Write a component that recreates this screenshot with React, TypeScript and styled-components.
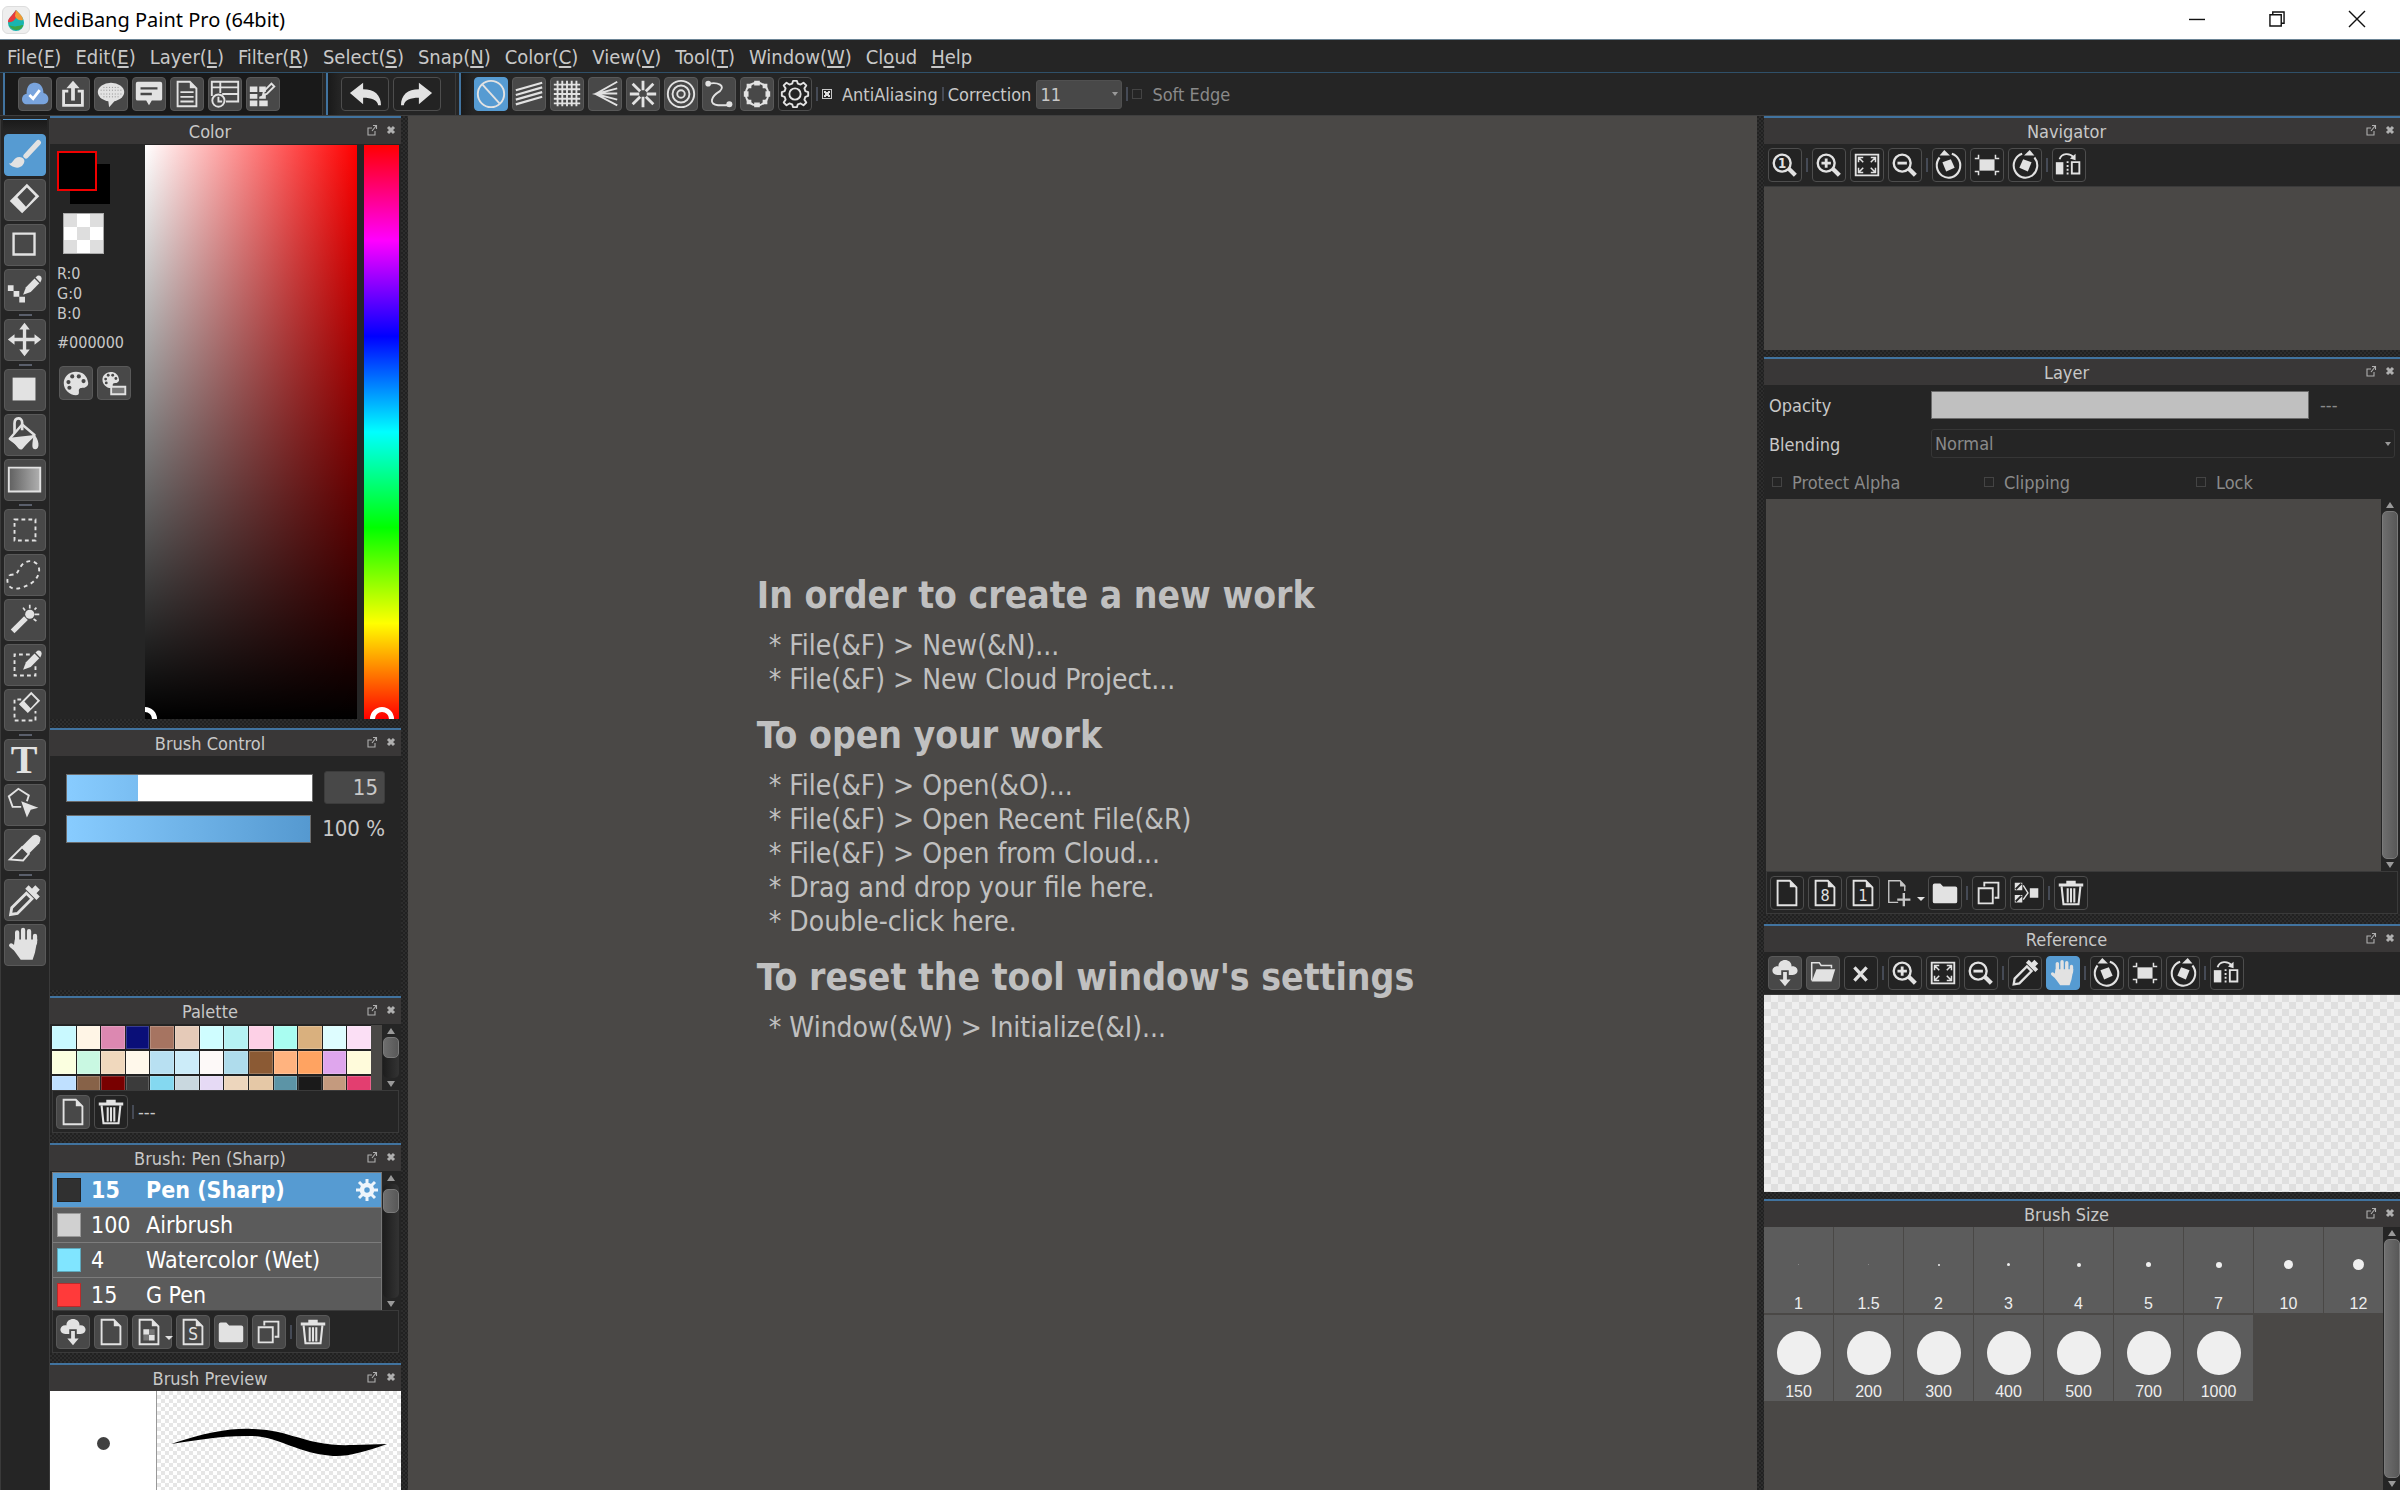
import React, { useState } from "react";
import styled, { createGlobalStyle, css } from "styled-components";

const c = {
  base: "#252525",
  canvas: "#4a4846",
  title: "#393737",
  line: "#3a3a3a",
  accent: "#569bd2",
  dock: "#41739f",
  icon: "#e2e2e2",
  text: "#c8c8c8",
  dim: "#8a8a8a",
};

const GlobalStyle = createGlobalStyle`
  *, *::before, *::after { box-sizing: border-box; }
  body {
    margin: 0;
    background: ${c.base};
    color: ${c.text};
    font-family: "DejaVu Sans Condensed", "Noto Sans", sans-serif;
    font-size: 18px;
  }
  button, input, select { font: inherit; color: inherit; margin: 0; }
  button { cursor: pointer; }
  h1, h2, p, ul { margin: 0; padding: 0; }
  ul { list-style: none; }
`;

/* ---------- icons ---------- */

const Svg = styled.svg`
  display: block;
  width: 100%;
  height: 100%;
  overflow: visible;
  fill: none;
  stroke: ${c.icon};
  stroke-width: 2;
  .f { fill: ${c.icon}; stroke: none; }
  .d { fill: #484848; stroke: none; }
  text { fill: ${c.icon}; stroke: none; text-anchor: middle; }
`;

const docPath = "M7 4H20L27 11V30H7Z";
const docFold = "M20 4V11H27Z";

const Magnifier = () => (
  <>
    <circle cx="14" cy="15" r="9" strokeWidth="2.5" />
    <path d="M21 21L28 28" strokeWidth="4.5" />
  </>
);
const Cloud = () => (
  <path
    className="f"
    d="M10 19C1 20 2 9 10 10C10 1 24 1 24 10C32 9 33 20 24 19H21V14H13V19Z"
  />
);
const Fingers = () => (
  <>
    <path d="M11 14V7M16 14V5M21 14V6M26 16V10" strokeWidth="3.6" strokeLinecap="round" />
    <path d="M12 23L6 18" strokeWidth="3.6" strokeLinecap="round" />
    <path className="f" d="M9 13H28L26 24L24 30H14L9 23L8 20Z" />
  </>
);
const Dropper = () => (
  <>
    <path d="M19 10L24 15L11 28L5 29L6 23Z" strokeWidth="2.5" />
    <path className="f" d="M18 6L21 3L31 13L28 16ZM22 8L27 3L31 7L26 12Z" />
  </>
);
const Trash = () => (
  <>
    <path className="f" d="M12 4H22V7H30V10H4V7H12Z" />
    <path d="M7 10L9 29H25L27 10M13.500 12V27M20.500 12V27M17 12V27" strokeWidth="2.2" />
  </>
);
const PaletteShape = () => (
  <>
    <path
      className="f"
      d="M17 5C9 5 4 11 4 17C4 24 10 30 17 30C21 30 20 27 20 25C20 22 23 22 26 22C29 21 30 19 30 17C29 9 24 5 17 5Z"
    />
    <g className="d">
      <circle cx="9" cy="16" r="2.200" />
      <circle cx="13" cy="10" r="2.200" />
      <circle cx="20" cy="10" r="2.200" />
      <circle cx="25" cy="15" r="2.200" />
      <circle cx="10" cy="22" r="2.200" />
    </g>
  </>
);

const small: Record<string, React.ReactNode> = {
  cloudCheck: (
    <>
      <path
        d="M9 28C1 28 2 17 8 17C8 7 13 5 17 5C22 5 26 9 26 16C33 17 33 28 26 28Z"
        style={{ fill: "#79a4dd", stroke: "none" }}
      />
      <path d="M11 18L15 22L22 13" style={{ stroke: "#fff" }} strokeWidth="3" />
    </>
  ),
  share: (
    <>
      <path d="M12 14H7V29H27V14H22" strokeWidth="3" />
      <path d="M17 24V9" strokeWidth="4" />
      <path className="f" d="M17 3L24 11H10Z" />
    </>
  ),
  bubble: (
    <>
      <ellipse className="f" cx="17" cy="15" rx="14" ry="10" />
      <path className="f" d="M14 23L15 31L23 22Z" />
      <path
        d="M9 10H26M6 13H29M6 17H29M9 20H26"
        style={{ stroke: "#8a8a8a" }}
        strokeWidth="1"
        strokeDasharray="1 2"
      />
    </>
  ),
  comment: (
    <>
      <path className="f" d="M5 4H29Q31 4 31 6V22Q31 24 29 24H20L17 29L14 24H5Q3 24 3 22V6Q3 4 5 4Z" />
      <path d="M8 11H26M8 17H20" style={{ stroke: "#484848" }} strokeWidth="2.500" />
    </>
  ),
  docText: (
    <>
      <path d={docPath} />
      <path className="f" d={docFold} />
      <path d="M10 15H24M10 20H24M10 25H24" />
    </>
  ),
  tableClock: (
    <>
      <path d="M3 19V4H31V25H18M3 10H31M12 4V16M14 17H31" />
      <circle cx="10" cy="24" r="6.500" />
      <path d="M10 20V25H14" />
    </>
  ),
  gridPen: (
    <>
      <path className="f" d="M3 9H11V15H3ZM13 9H20V15H13ZM3 17H11V22H3ZM13 20L20 17V22H13ZM3 24H11V30H3ZM13 24H22V30H13Z" />
      <path d="M17 18L18 14L26 6L29 9L21 17Z" />
    </>
  ),
  ban: (
    <>
      <circle cx="17" cy="17" r="14" />
      <path d="M8 7L26 27" />
    </>
  ),
  parallel: <path d="M3 13L31 5M3 18L31 10M3 23L31 15M3 28L31 20" strokeWidth="2.300" />,
  grid: <path d="M7 3V30M12 3V30M17 3V30M22 3V30M27 3V30M3 7H31M3 12H31M3 17H31M3 22H31M3 27H31" />,
  persp: <path d="M30 4L7 17L30 29M30 11L7 17L30 23M30 16.500H7" />,
  radial: (
    <path d="M17 3V13M17 20V31M3 17H13M21 17H31M6 6L14 14M28 6L20 14M6 28L14 20M28 28L20 20" strokeWidth="3" />
  ),
  rings: (
    <>
      <circle cx="17" cy="17" r="14" />
      <circle cx="17" cy="17" r="9" />
      <circle cx="17" cy="17" r="4" />
    </>
  ),
  curve: (
    <>
      <path d="M6 6C16 4 24 8 18 14C8 20 6 28 16 29H27" />
      <circle className="f" cx="5.500" cy="6" r="3" />
      <circle className="f" cx="28" cy="28" r="3.200" />
    </>
  ),
  ellipse: (
    <>
      <circle cx="17" cy="17" r="12" />
      <path className="f" d="M14 3H20V8H14ZM14 26H20V31H14ZM3 14H8V20H3ZM26 14H31V20H26ZM6 6H11V11H6ZM23 6H28V11H23ZM6 23H11V28H6ZM23 23H28V28H23Z" />
    </>
  ),
  gear: (
    <>
      <path
        strokeLinejoin="round"
        d="M15 3H19L20 6L23 7L26 5L29 8L27 11L28 14L31 15V19L28 20L27 23L29 26L26 29L23 27L20 28L19 31H15L14 28L11 27L8 29L5 26L7 23L6 20L3 19V15L6 14L7 11L5 8L8 5L11 7L14 6Z"
      />
      <circle cx="17" cy="17" r="6" />
    </>
  ),
  palette: <PaletteShape />,
  paletteBar: (
    <>
      <g transform="translate(2 2) scale(.68)">
        <PaletteShape />
      </g>
      <path d="M14 21H29V29H14Z" style={{ fill: "#777" }} />
    </>
  ),
  zoom1: (
    <>
      <Magnifier />
      <text x="14" y="20" fontSize="14" fontWeight="700">1</text>
    </>
  ),
  zoomIn: (
    <>
      <Magnifier />
      <path d="M9 15H19M14 10V20" strokeWidth="3" />
    </>
  ),
  zoomOut: (
    <>
      <Magnifier />
      <path d="M9 15H19" strokeWidth="3" />
    </>
  ),
  fit: (
    <>
      <path d="M5 6H29V28H5Z" />
      <path d="M8 14V9H13M8 9L13 14M21 9H26V14M26 9L21 14M8 20V25H13M8 25L13 20M26 20V25H21M26 25L21 20" strokeWidth="1.600" />
    </>
  ),
  rotL: (
    <>
      <path d="M7 9A12.500 13 0 1 0 20 5" strokeWidth="2.200" />
      <path className="f" d="M7 7L12 1L18 7Z" />
      <path className="f" d="M10 14L19 11L23 20L14 24Z" />
    </>
  ),
  rotR: (
    <>
      <path d="M27 9A12.500 13 0 1 1 14 5" strokeWidth="2.200" />
      <path className="f" d="M27 7L22 1L16 7Z" />
      <path className="f" d="M24 14L15 11L11 20L20 24Z" />
    </>
  ),
  reset: (
    <>
      <path className="f" d="M9 11H25V23H9Z" />
      <path d="M4 10H8V6M26 6V10H30M4 24H8V28M26 28V24H30" strokeWidth="1.600" />
    </>
  ),
  flip: (
    <>
      <path className="f" d="M3 14H11V27H3Z" />
      <path d="M20 14H28V26H20Z" />
      <path d="M15.500 13V28" strokeDasharray="2 2" />
      <path d="M7 11C9 4 18 4 22 9" />
      <path className="f" d="M18 10L24 5L24 12Z" />
    </>
  ),
  doc: (
    <>
      <path d={docPath} />
      <path className="f" d={docFold} />
    </>
  ),
  doc8: (
    <>
      <path d={docPath} />
      <path className="f" d={docFold} />
      <text x="17" y="25" fontSize="17">8</text>
    </>
  ),
  doc1: (
    <>
      <path d={docPath} />
      <path className="f" d={docFold} />
      <text x="17" y="25" fontSize="17">1</text>
    </>
  ),
  docS: (
    <>
      <path d={docPath} />
      <path className="f" d={docFold} />
      <text x="17" y="26" fontSize="18">S</text>
    </>
  ),
  docChecker: (
    <>
      <path d={docPath} />
      <path className="f" d={docFold} />
      <path className="f" d="M11 14H17V20H11ZM17 20H23V26H17Z" />
      <path d="M17 14H23V20H17ZM11 20H17V26H11Z" style={{ fill: "#777", stroke: "none" }} />
    </>
  ),
  docPlus: (
    <g style={{ opacity: 0.85 }}>
      <path d="M14 27H4V4H16L21 9V15" strokeWidth="1.500" />
      <path className="f" d="M16 4V10H22Z" />
      <path d="M13 24H27M20 17V31" strokeWidth="2.500" />
    </g>
  ),
  folder: <path className="f" d="M4 9Q4 7 6 7H12L15 10H28Q30 10 30 12V26Q30 28 28 28H6Q4 28 4 26Z" />,
  folderOpen: (
    <>
      <path d="M5 25V6H13L15 9H26V12" strokeWidth="1.600" />
      <path className="f" d="M10 13H30L26 26H5Z" />
    </>
  ),
  copy: (
    <>
      <path d="M6 12H21V28H6Z" />
      <path d="M12 10V6H27V22H23" />
    </>
  ),
  merge: (
    <>
      <path className="f" d="M4 6H12V14H4ZM4 19H12V27H4ZM20 12H29V22H20Z" />
      <path d="M5 13L11 7M5 26L11 20" style={{ stroke: "#252525" }} />
      <path d="M13 9L18 17L13 24" strokeWidth="1.500" />
    </>
  ),
  trash: <Trash />,
  cloudDown: (
    <>
      <Cloud />
      <path className="f" d="M15 16H19V24H23L17 31L11 24H15Z" />
    </>
  ),
  cross: <path d="M10 11L23 25M23 11L10 25" strokeWidth="3.500" />,
  dropper: <Dropper />,
  hand: <Fingers />,
};

const wide: Record<string, React.ReactNode> = {
  undo: <path className="f" d="M8 16L22 5V12C34 12 41 18 41 29H38C37 23 31 21 22 21V28Z" />,
  redo: <path className="f" d="M40 16L26 5V12C14 12 7 18 7 29H10C11 23 17 21 26 21V28Z" />,
};

const eraserPath = "M23 4L36 17L18 35L5 22ZM23 8L13 18L22 28L32 17Z";
const dashBox = "M10 10H32V32H10Z";
const Pencil = () => (
  <>
    <path className="f" d="M19 26L22 18L31 9L36 14L27 23Z" />
    <path className="f" d="M32 8L34 6Q36 5 38 7Q39 9 38 11L37 13Z" />
  </>
);

const tools: Record<string, React.ReactNode> = {
  brush: (
    <>
      <path d="M22 22L35 8" strokeWidth="5.500" strokeLinecap="round" />
      <path className="f" d="M4 30C9 30 9 23 15 23C20 23 22 27 19 31C16 36 8 35 4 30Z" />
    </>
  ),
  eraser: <path className="f" fillRule="evenodd" d={eraserPath} />,
  rect: <path d="M9 9H31V31H9Z" strokeWidth="2.500" />,
  dotPen: (
    <>
      <path className="f" d="M3 16H9V22H3ZM9 22H15V28H9ZM15 28H21V34H15Z" />
      <Pencil />
    </>
  ),
  move: (
    <>
      <path d="M20.500 8V33M8 20.500H33" strokeWidth="3.500" />
      <path className="f" d="M20.500 3L26 10H15ZM20.500 38L26 31H15ZM3 20.500L10 15V26ZM38 20.500L31 15V26Z" />
    </>
  ),
  fillRect: <path className="f" d="M8 8H32V32H8Z" />,
  bucket: (
    <>
      <path d="M10 19V9C10 2 18 2 18 8V16" strokeWidth="2.800" />
      <path d="M18 10L31 21L17 34L5 25Z" strokeWidth="2.500" strokeLinejoin="round" />
      <path className="f" d="M5 24L31 21L18 36Q16 37 14 35Z" />
      <path className="f" d="M30 20C36 25 37 36 32 36C27 36 29 30 30 20Z" />
    </>
  ),
  gradient: (
    <>
      <defs>
        <linearGradient id="toolGradient">
          <stop offset="0" stopColor="#606060" />
          <stop offset="1" stopColor="#b0b0b0" />
        </linearGradient>
      </defs>
      <path d="M4 8H37V33H4Z" style={{ fill: "url(#toolGradient)" }} />
    </>
  ),
  selRect: <path d={dashBox} strokeDasharray="4 3.300" />,
  lasso: (
    <path
      d="M5 21L12 20L16 13C19 7 27 4 33 9C39 15 35 25 27 30C19 35 8 38 4 32C1 26 3 24 5 21"
      strokeDasharray="4 4"
    />
  ),
  wand: (
    <>
      <path d="M8 33L22 19" strokeWidth="5.500" />
      <circle className="f" cx="26" cy="15" r="4.800" />
      <path d="M26 5V9M19 8L21 11M33 8L31 10M31 15H36M30 20L33 22" strokeWidth="1.800" />
    </>
  ),
  selPen: (
    <>
      <path d="M26 10H10V32H32V20" strokeDasharray="4 3.300" />
      <Pencil />
    </>
  ),
  selEraser: (
    <>
      <path d="M17 10H10V32H32V22" strokeDasharray="4 3.300" />
      <g transform="translate(11 -1) scale(.72)">
        <path className="f" fillRule="evenodd" d={eraserPath} />
      </g>
    </>
  ),
  text: (
    <text x="20" y="35" fontSize="42" fontWeight="700" fontFamily="Liberation Serif, serif">T</text>
  ),
  polyCursor: (
    <>
      <path d="M17 23H8L4 12L14 4L25 11L23 17" />
      <path className="f" d="M17 17L35 24L27 26L23 34Z" />
    </>
  ),
  knife: (
    <>
      <path d="M5 31L18 18L25 25L19 32Z" />
      <path className="f" d="M17 18L29 6Q34 3 37 8Q38 11 36 14L25 25Z" />
    </>
  ),
  dropper: (
    <g transform="translate(0 2) scale(1.180)">
      <Dropper />
    </g>
  ),
  hand: (
    <g transform="translate(-1 -1) scale(1.250)">
      <Fingers />
    </g>
  ),
};

/* ---------- shared parts ---------- */

type Look = "raised" | "flat" | "active" | "bare";

const looks = {
  raised: css`background: #484848; border-color: #595959;`,
  flat: css`background: #232323; border-color: #4d4d4d;`,
  active: css`background: ${c.accent}; border-color: ${c.accent};`,
  bare: css`background: transparent; border-color: transparent;`,
};

const IconButton = styled.button<{ $look: Look; $w?: number; $h?: number }>`
  display: flex;
  align-items: center;
  flex: none;
  width: ${(p) => p.$w ?? 34}px;
  height: ${(p) => p.$h ?? 34}px;
  padding: 0;
  border: 1px solid;
  border-radius: 4px;
  ${(p) => looks[p.$look]}
`;

const Tick = styled.span`
  flex: none;
  align-self: flex-end;
  margin-bottom: 8px;
  border: 4px solid transparent;
  border-top-color: ${c.icon};
  border-bottom: 0;
`;

const Divider = styled.span`
  flex: none;
  width: 2px;
  height: 14px;
  background: #454a55;
`;

const Bar = styled.div`
  display: flex;
  align-items: center;
  gap: 4px;
  height: 43px;
  padding: 0 4px;
  border: solid ${c.line};
  border-width: 0 0 1px;
  flex: none;
`;

type Item = "|" | [name: string, label: string, look?: Look, menu?: boolean];

const Icons = ({ items, look = "flat" }: { items: Item[]; look?: Look }) => (
  <>
    {items.map((it, i) =>
      it === "|" ? (
        <Divider key={i} />
      ) : (
        <IconButton key={i} $look={it[2] ?? look} $w={it[3] ? 40 : 34} aria-label={it[1]}>
          <Svg viewBox="0 0 34 34">{small[it[0]]}</Svg>
          {it[3] && <Tick />}
        </IconButton>
      )
    )}
  </>
);

const PanelBox = styled.section<{ $grow?: boolean }>`
  display: flex;
  flex-direction: column;
  flex: ${(p) => (p.$grow ? "1 1 0" : "none")};
  min-height: 0;
  border-top: 2px solid ${c.dock};
`;

const PanelTitle = styled.header`
  display: flex;
  align-items: center;
  flex: none;
  height: 26px;
  background: ${c.title};
  h2 {
    flex: 1;
    padding-left: 6px;
    text-align: center;
    font-size: 18px;
    line-height: 26px;
    padding-top: 1px;
    font-weight: 400;
  }
`;

const TitleButton = styled.button`
  width: 16px;
  height: 24px;
  padding: 0 2px 2px;
  border: 0;
  background: none;
  margin-right: 3px;
  & + & { margin-right: 2px; }
  svg { stroke: #b0b0b0; }
`;

const Splitter = styled.div<{ $vertical?: boolean; $size: number }>`
  flex: none;
  ${(p) => (p.$vertical ? `width: ${p.$size}px;` : `height: ${p.$size}px;`)}
  background: repeating-conic-gradient(#2d2d2d 0 25%, #212121 0 50%) 0 0 / 4px 4px;
`;

const Panel = ({ title, grow, children }: { title: string; grow?: boolean; children: React.ReactNode }) => (
  <PanelBox $grow={grow}>
    <PanelTitle>
      <h2>{title}</h2>
      <TitleButton aria-label={`Float ${title}`}>
        <Svg viewBox="0 0 12 12">
          <path d="M6 4H2V11H9V7M6 7L10 2M7 1.500H10.500V5" strokeWidth="1.100" />
        </Svg>
      </TitleButton>
      <TitleButton aria-label={`Close ${title}`}>
        <Svg viewBox="0 0 12 12">
          <path d="M3 3L9 9M9 3L3 9" strokeWidth="3" />
        </Svg>
      </TitleButton>
    </PanelTitle>
    {children}
  </PanelBox>
);

const ScrollTrack = styled.div`
  display: flex;
  flex-direction: column;
  align-items: center;
  flex: none;
  width: 17px;
  background: ${c.base};
`;
const Arrow = styled.span<{ $down?: boolean }>`
  margin: 3px 0;
  border: solid transparent;
  border-width: 0 4px;
  ${(p) => (p.$down ? "border-top: 6px solid #9a9a9a;" : "border-bottom: 6px solid #9a9a9a;")}
`;
const Groove = styled.div<{ $top: number }>`
  flex: 1;
  min-height: 0;
  width: 16px;
  padding-top: ${(p) => p.$top}px;
  border-radius: 5px;
  background: linear-gradient(90deg, #1d1d1d, #333);
`;
const Thumb = styled.div<{ $h: string }>`
  height: ${(p) => p.$h};
  border-radius: 5px;
  border: 1px solid #7a7a7a;
  background: linear-gradient(90deg, #6e6e6e, #585858);
`;
const Scrollbar = ({ thumb, top = 0 }: { thumb: string; top?: number }) => (
  <ScrollTrack>
    <Arrow />
    <Groove $top={top}>
      <Thumb $h={thumb} />
    </Groove>
    <Arrow $down />
  </ScrollTrack>
);

const Check = styled.label<{ $dim?: boolean }>`
  display: flex;
  align-items: center;
  gap: 10px;
  color: ${(p) => (p.$dim ? c.dim : c.text)};
  white-space: nowrap;
  input {
    appearance: none;
    width: 10px;
    height: 10px;
    border: 1px solid ${(p) => (p.$dim ? "#444" : "#c8c8c8")};
  }
  input:checked {
    background:
      linear-gradient(45deg, transparent 40%, #ddd 40% 60%, transparent 60%) center / 6px 6px no-repeat,
      linear-gradient(-45deg, transparent 40%, #ddd 40% 60%, transparent 60%) center / 6px 6px no-repeat;
  }
`;

const Range = styled.input.attrs({ type: "range" })<{ $fill: number; $solid?: string }>`
  appearance: none;
  flex: 1;
  min-width: 0;
  height: 28px;
  border: 1px solid #6b6b6b;
  background: ${(p) =>
    p.$solid ??
    `linear-gradient(90deg, transparent ${p.$fill}%, #fff ${p.$fill}%),
     linear-gradient(90deg, #88ccff, #5599d0)`};
  &::-webkit-slider-thumb { appearance: none; width: 1px; height: 26px; }
`;

/* ---------- window chrome ---------- */

const Window = styled.div`
  display: flex;
  flex-direction: column;
  height: 100vh;
  overflow: hidden;
`;

const TitleBar = styled.header`
  display: flex;
  align-items: center;
  flex: none;
  height: 40px;
  padding: 0 3px 0 2px;
  background: #fff;
  border-bottom: 1px solid #6d8596;
  color: #000;
  h1 {
    flex: 1;
    padding-left: 4px;
    font: 400 20px/38px "Noto Sans", "Open Sans", sans-serif;
  }
`;
const Logo = styled.span`
  display: block;
  width: 28px;
  height: 28px;
  border: 1px solid #ddd;
  border-radius: 6px;
  background: #eee;
`;
const WindowButton = styled.button`
  width: 80px;
  height: 36px;
  padding: 0 32px 2px;
  border: 0;
  background: none;
  svg { stroke: #111; }
`;

const MenuBar = styled.nav`
  display: flex;
  flex: none;
  height: 33px;
  border-bottom: 1px solid #2f5069;
`;
const MenuButton = styled.button`
  padding: 2px 7px 0;
  border: 0;
  background: none;
  font-size: 20px;
  line-height: 30px;
  white-space: nowrap;
  u { text-underline-offset: 2px; }
`;

const ToolBars = styled.div`
  display: flex;
  flex: none;
  height: 43px;
  border-bottom: 1px solid #3f3f3f;
`;
const ToolGroup = styled.div<{ $w?: number; $dark?: boolean }>`
  display: flex;
  align-items: center;
  gap: 4px;
  padding-left: 13px;
  border-left: 2px solid ${c.dock};
  margin-left: 3px;
  ${(p) => (p.$w ? `width: ${p.$w}px; border-right: 1px solid ${c.line};` : "flex: 1;")}
  background: ${(p) => (p.$dark ? "#191919" : `linear-gradient(90deg, #1a1a1a, ${c.base} 12px)`)};
`;
const Correction = styled.label`
  display: flex;
  align-items: center;
  gap: 5px;
`;
const SelectWrap = styled.span<{ $disabled?: boolean; $w?: number }>`
  display: flex;
  align-items: center;
  ${(p) => (p.$w ? `width: ${p.$w}px;` : "flex: 1;")}
  height: 29px;
  padding-right: 3px;
  border: 1px solid ${(p) => (p.$disabled ? "#363636" : "#505050")};
  border-radius: 3px;
  background: ${(p) => (p.$disabled ? "transparent" : "#484848")};
  select {
    appearance: none;
    flex: 1;
    min-width: 0;
    border: 0;
    padding: 0 3px;
    background: none;
    opacity: 1;
    color: ${(p) => (p.$disabled ? c.dim : c.text)};
  }
`;
const Caret = styled.span`
  border: 3px solid transparent;
  border-top: 4px solid #9a9a9a;
  border-bottom: 0;
`;

const Workspace = styled.main`
  display: flex;
  flex: 1;
  min-height: 0;
`;

const ToolColumn = styled.div`
  display: flex;
  flex-direction: column;
  align-items: center;
  gap: 3px;
  flex: none;
  width: 50px;
  margin-top: 3px;
  padding: 0 1px;
  border: solid ${c.line};
  border-width: 0 1px;
  &::before {
    content: "";
    width: 44px;
    height: 12px;
    border-top: 1px solid ${c.accent};
    background: linear-gradient(#1a1a1a, ${c.base});
  }
`;
const ToolDivider = styled.span`
  width: 13px;
  height: 2px;
  background: #5a5f6b;
`;

const Dock = styled.aside<{ $w: number }>`
  display: flex;
  flex-direction: column;
  flex: none;
  width: ${(p) => p.$w}px;
`;

/* ---------- color panel ---------- */

const ColorBody = styled.div`
  display: flex;
  height: 575px;
  padding: 1px 2px 0 7px;
`;
const ColorSide = styled.div`
  display: flex;
  flex-direction: column;
  width: 88px;
  padding-top: 6px;
  font-size: 16px;
  line-height: 20px;
`;
const Swatches = styled.div`
  position: relative;
  height: 53px;
  &::before, &::after {
    content: "";
    position: absolute;
    width: 40px;
    height: 40px;
    background: #000;
  }
  &::before { left: 13px; top: 13px; }
  &::after { left: 0; top: 0; border: 2px solid #f00000; }
`;
const Transparent = styled.button`
  width: 41px;
  height: 41px;
  margin: 9px 0 10px 6px;
  border: 1px solid #aaa;
  background: repeating-conic-gradient(#dedede 0 25%, #fff 0 50%) 13px 0 / 26px 26px;
`;
const Hex = styled.p`
  margin: 9px 0 13px;
`;
const Row = styled.div`
  display: flex;
  gap: 4px;
  padding-left: 2px;
`;
const Shade = styled.div`
  position: relative;
  flex: 1;
  overflow: hidden;
  background: linear-gradient(transparent, #000), linear-gradient(90deg, #fff, #f00);
`;
const HueBar = styled.label`
  position: relative;
  overflow: hidden;
  width: 35px;
  margin-left: 7px;
  input {
    appearance: none;
    display: block;
    width: 100%;
    height: 100%;
    background: linear-gradient(#f00, #f0f, #00f, #0ff, #0f0, #ff0, #f00);
  }
  input::-webkit-slider-thumb { appearance: none; width: 0; height: 0; }
`;
const Ring = styled.span<{ $x: string }>`
  position: absolute;
  left: ${(p) => p.$x};
  bottom: -12px;
  width: 24px;
  height: 24px;
  margin-left: -12px;
  border: 5px solid #fff;
  border-radius: 50%;
`;

/* ---------- brush control ---------- */

const ControlBody = styled.div`
  display: flex;
  flex-direction: column;
  gap: 8px;
  height: 234px;
  padding: 15px 16px 0;
  font-size: 22px;
`;
const ControlRow = styled.div`
  display: flex;
  align-items: center;
  gap: 11px;
  height: 33px;
  input[type="text"] {
    width: 61px;
    height: 33px;
    padding: 0 6px;
    border: 1px solid #3c3c3c;
    border-radius: 3px;
    background: #484848;
    text-align: right;
  }
`;

/* ---------- palette, brushes ---------- */

const Inset = styled.div<{ $h: number }>`
  display: flex;
  flex: none;
  height: ${(p) => p.$h}px;
  margin: 1px 2px 0;
  overflow: hidden;
`;
const SwatchGrid = styled.div`
  display: grid;
  grid-template-columns: repeat(13, 1fr);
  grid-auto-rows: 23px;
  gap: 2px 1px;
  flex: 1;
  padding: 1px 11px 0 0;
  background: linear-gradient(90deg, #222 calc(100% - 11px), ${c.canvas} 0);
`;
const Swatch = styled.button<{ $c: string }>`
  padding: 0;
  border: 1px solid #ffffff30;
  background: ${(p) => p.$c};
`;
const InsetBar = styled(Bar)`
  margin: 0 2px;
  border-width: 1px;
  padding: 0 3px;
`;
const BrushList = styled.ul`
  flex: 1;
  background: #5b5b5b;
  border: solid #777;
  border-width: 1px 1px 0;
`;
const BrushRow = styled.button<{ $on?: boolean }>`
  display: grid;
  grid-template-columns: 24px 45px 1fr 22px;
  gap: 10px;
  align-items: center;
  width: 100%;
  height: 35px;
  padding: 0 3px 0 4px;
  border: 0;
  border-bottom: 1px solid #7c7c7c;
  background: ${(p) => (p.$on ? c.accent : "none")};
  color: #fff;
  font-size: 23px;
  font-weight: ${(p) => (p.$on ? 700 : 400)};
  line-height: 34px;
  text-align: left;
  white-space: nowrap;
  svg { height: 22px; stroke: #eef5fb; }
`;
const Chip = styled.span<{ $c: string }>`
  width: 24px;
  height: 24px;
  border: 1px solid #0004;
  background: ${(p) => p.$c};
`;

const Preview = styled.div`
  display: flex;
  flex: 1;
  min-height: 0;
`;
const Dab = styled.div`
  display: flex;
  align-items: center;
  justify-content: center;
  width: 107px;
  border-right: 1px solid #999;
  padding-top: 6px;
  background: #fff;
  &::before {
    content: "";
    width: 13px;
    height: 13px;
    border-radius: 50%;
    background: #404040;
  }
`;
const Stroke = styled.div`
  flex: 1;
  background: repeating-conic-gradient(#e6e6e6 0 25%, #fff 0 50%) 0 0 / 8px 8px;
  svg { height: 100px; }
`;

/* ---------- canvas ---------- */

const Canvas = styled.section`
  display: flex;
  align-items: center;
  justify-content: center;
  flex: 1;
  padding: 11px 0 0 6px;
  background: ${c.canvas};
  color: #c0c0c0;
`;
const Help = styled.div`
  display: flex;
  flex-direction: column;
  gap: 16px;
  h2 {
    margin-bottom: 10px;
    font-size: 37px;
    line-height: 46px;
  }
  li {
    padding-left: 12px;
    font-size: 28px;
    line-height: 34px;
  }
`;

/* ---------- right dock ---------- */

const Viewer = styled.div<{ $h: number; $checker?: boolean }>`
  flex: none;
  height: ${(p) => p.$h}px;
  background: ${(p) =>
    p.$checker ? "repeating-conic-gradient(#efefef 0 25%, #dfdfdf 0 50%) 0 0 / 14px 14px" : c.canvas};
`;
const Field = styled.div`
  display: flex;
  align-items: center;
  height: 39px;
  padding: 0 5px;
  label { width: 162px; padding-top: 2px; }
`;
const Value = styled.span`
  width: 86px;
  padding-left: 11px;
  color: ${c.dim};
`;
const Checks = styled.div`
  display: grid;
  grid-template-columns: repeat(3, 1fr);
  height: 36px;
  label { padding: 2px 0 0 8px; }
`;
const LayerList = styled.div`
  display: flex;
  flex: none;
  height: 372px;
  margin: 0 2px;
  background: ${c.canvas};
  &::before { content: ""; flex: 1; }
`;
const Sizes = styled.div`
  display: flex;
  flex: 1;
  min-height: 0;
  background: ${c.canvas};
`;
const SizeGrid = styled.div`
  display: grid;
  grid-template-columns: repeat(9, 69px);
  grid-auto-rows: 86px;
  gap: 2px 1px;
  flex: 1;
  min-width: 0;
  overflow: hidden;
`;
const Size = styled.button`
  display: flex;
  flex-direction: column;
  align-items: center;
  padding: 7px 0 0;
  border: 0;
  background: #5c5c5c;
  color: #eee;
  font: 16px/18px "Liberation Sans", sans-serif;
`;
const DotBox = styled.span`
  display: flex;
  align-items: center;
  height: 66px;
`;
const Dot = styled.span<{ $d: number }>`
  width: ${(p) => p.$d}px;
  height: ${(p) => p.$d}px;
  border-radius: 50%;
  background: #efefef;
  opacity: ${(p) => (p.$d < 2 ? 0.4 : 1)};
`;

/* ---------- data ---------- */

const menus: [string, string, string][] = [
  ["File(", "F", ")"], ["Edit(", "E", ")"], ["Layer(", "L", ")"], ["Filter(", "R", ")"],
  ["Select(", "S", ")"], ["Snap(", "N", ")"], ["Color(", "C", ")"], ["View(", "V", ")"],
  ["Tool(", "T", ")"], ["Window(", "W", ")"], ["Cl", "o", "ud"], ["", "H", "elp"],
];

const toolGroups = [
  ["brush", "eraser", "rect", "dotPen"],
  ["move"],
  ["fillRect", "bucket", "gradient"],
  ["selRect", "lasso", "wand", "selPen", "selEraser"],
  ["text", "polyCursor", "knife"],
  ["dropper", "hand"],
];

const swatches =
  "c9f9ff fff5e6 dc88b1 0a0f78 a67461 e5cab8 cffdff b5f2f3 fdd0e6 a9fdf1 d9b07e defdff fbdff5 fbffe0 c9f8e2 f0d8bd fff8eb b8e0f2 ccecf9 fdf9f8 afdcec 8b5a34 ffb37f ffa361 dfa6ed fffbdb bfe0ff 876248 780000 3b3b3b 84d8f0 c9d8df e6daf5 edd6bd e5c8a6 5c94a6 1a1a1a c49a7e e33e70".split(" ");

const brushes: [string, string, string][] = [
  ["#303030", "15", "Pen (Sharp)"],
  ["#d0d0d0", "100", "Airbrush"],
  ["#80e5ff", "4", "Watercolor (Wet)"],
  ["#ff3a3a", "15", "G Pen"],
];

const sizes: [string, number][] = [
  ["1", 1], ["1.5", 1], ["2", 2], ["3", 3], ["4", 4], ["5", 5], ["7", 6], ["10", 9], ["12", 11],
  ["150", 44], ["200", 44], ["300", 44], ["400", 44], ["500", 44], ["700", 44], ["1000", 44],
];

const help: [string, string[]][] = [
  ["In order to create a new work", ["File(&F) > New(&N)...", "File(&F) > New Cloud Project..."]],
  ["To open your work", [
    "File(&F) > Open(&O)...",
    "File(&F) > Open Recent File(&R)",
    "File(&F) > Open from Cloud...",
    "Drag and drop your file here.",
    "Double-click here.",
  ]],
  ["To reset the tool window's settings", ["Window(&W) > Initialize(&I)..."]],
];

const viewTools: Item[] = [
  ["rotL", "Rotate left"], ["reset", "Reset view"], ["rotR", "Rotate right"], "|", ["flip", "Flip"],
];

/* ---------- app ---------- */

export default function App() {
  const [tool, setTool] = useState("brush");
  const [brush, setBrush] = useState(0);
  const [size, setSize] = useState(15);
  const [alpha, setAlpha] = useState(100);

  return (
    <Window>
      <GlobalStyle />
      <TitleBar>
        <Logo>
          <svg viewBox="0 0 26 26" aria-hidden="true">
            <path d="M13 3C18 8 21 11 21 16A8 8 0 0 1 5 16C5 11 9 9 13 3Z" fill="#19b5b0" />
            <path d="M13 3C9 9 5 11 5 15C9 16 12 13 14 9Z" fill="#e8383d" />
            <path d="M13 3C18 8 20 10 20 13C16 14 13 12 12 9Z" fill="#f39a36" />
            <path d="M6 18C9 24 17 25 20 19C21 16 14 22 6 18Z" fill="#3aa648" />
          </svg>
        </Logo>
        <h1>MediBang Paint Pro (64bit)</h1>
        <WindowButton aria-label="Minimize">
          <Svg viewBox="0 0 17 17"><path d="M0 9H17" strokeWidth="1.500" /></Svg>
        </WindowButton>
        <WindowButton aria-label="Restore">
          <Svg viewBox="0 0 17 17"><path d="M1 4H13V16H1ZM4 4V1H16V13H13" strokeWidth="1.500" /></Svg>
        </WindowButton>
        <WindowButton aria-label="Close">
          <Svg viewBox="0 0 17 17"><path d="M0 0L17 17M17 0L0 17" strokeWidth="1.500" /></Svg>
        </WindowButton>
      </TitleBar>

      <MenuBar>
        {menus.map(([a, u, b]) => (
          <MenuButton key={a + u}>{a}<u>{u}</u>{b}</MenuButton>
        ))}
      </MenuBar>

      <ToolBars>
        <ToolGroup $w={320} $dark>
          <Icons
            look="raised"
            items={[
              ["cloudCheck", "Cloud"], ["share", "Share"], ["bubble", "Chat"], ["comment", "Comment"],
              ["docText", "Document"], ["tableClock", "History"], ["gridPen", "Edit grid"],
            ]}
          />
        </ToolGroup>
        <ToolGroup $w={130}>
          <IconButton $look="flat" $w={48} aria-label="Undo"><Svg viewBox="0 0 48 34">{wide.undo}</Svg></IconButton>
          <IconButton $look="flat" $w={48} aria-label="Redo"><Svg viewBox="0 0 48 34">{wide.redo}</Svg></IconButton>
        </ToolGroup>
        <ToolGroup>
          <Icons
            look="raised"
            items={[
              ["ban", "Snap off", "active"], ["parallel", "Parallel snap"], ["grid", "Grid snap"],
              ["persp", "Vanishing point snap"], ["radial", "Radial snap"], ["rings", "Concentric snap"],
              ["curve", "Curve snap"], ["ellipse", "Ellipse snap"], ["gear", "Snap settings", "flat"], "|",
            ]}
          />
          <Check><input type="checkbox" defaultChecked />AntiAliasing</Check>
          <Divider />
          <Correction>
            Correction
            <SelectWrap $w={86}>
              <select defaultValue="11"><option>11</option></select>
              <Caret />
            </SelectWrap>
          </Correction>
          <Divider />
          <Check $dim><input type="checkbox" disabled />Soft Edge</Check>
        </ToolGroup>
      </ToolBars>

      <Workspace>
        <ToolColumn>
          {toolGroups.map((g, i) => (
            <React.Fragment key={i}>
              {i > 0 && <ToolDivider />}
              {g.map((t) => (
                <IconButton
                  key={t}
                  $w={42}
                  $h={42}
                  $look={t === tool ? "active" : "raised"}
                  aria-label={t}
                  onClick={() => setTool(t)}
                >
                  <Svg viewBox="0 0 42 42">{tools[t]}</Svg>
                </IconButton>
              ))}
            </React.Fragment>
          ))}
        </ToolColumn>

        <Dock $w={351}>
          <Panel title="Color">
            <ColorBody>
              <ColorSide>
                <Swatches />
                <Transparent aria-label="Transparent" />
                <p>R:0</p>
                <p>G:0</p>
                <p>B:0</p>
                <Hex>#000000</Hex>
                <Row>
                  <Icons look="raised" items={[["palette", "Color wheel"], ["paletteBar", "Color bar"]]} />
                </Row>
              </ColorSide>
              <Shade><Ring $x="0%" /></Shade>
              <HueBar>
                <input type="range" aria-label="Hue" defaultValue={0} />
                <Ring $x="50%" />
              </HueBar>
            </ColorBody>
          </Panel>
          <Splitter $size={9} />

          <Panel title="Brush Control">
            <ControlBody>
              <ControlRow>
                <Range $fill={29} aria-label="Brush width" value={size} onChange={(e) => setSize(+e.target.value)} />
                <input type="text" aria-label="Brush width value" value={size} readOnly />
              </ControlRow>
              <ControlRow>
                <Range $fill={alpha} aria-label="Brush opacity" value={alpha} onChange={(e) => setAlpha(+e.target.value)} />
                <span>{alpha} %</span>
              </ControlRow>
            </ControlBody>
          </Panel>
          <Splitter $size={6} />

          <Panel title="Palette">
            <Inset $h={65}>
              <SwatchGrid>
                {swatches.map((s) => <Swatch key={s} $c={`#${s}`} aria-label={`#${s}`} />)}
              </SwatchGrid>
              <Scrollbar thumb="52%" />
            </Inset>
            <InsetBar>
              <Icons items={[["doc", "Add color", "raised"], ["trash", "Delete color"], "|"]} />
              <span>---</span>
            </InsetBar>
          </Panel>
          <Splitter $size={10} />

          <Panel title="Brush: Pen (Sharp)">
            <Inset $h={138}>
              <BrushList>
                {brushes.map(([col, n, name], i) => (
                  <li key={name}>
                    <BrushRow $on={i === brush} onClick={() => setBrush(i)}>
                      <Chip $c={col} />
                      <span>{n}</span>
                      <span>{name}</span>
                      {i === brush && (
                        <Svg viewBox="0 0 22 22">
                          <circle cx="11" cy="11" r="5" strokeWidth="4.500" />
                          <path d="M11 0V5M11 17V22M0 11H5M17 11H22M3 3L7 7M15 15L19 19M19 3L15 7M7 15L3 19" strokeWidth="3" />
                        </Svg>
                      )}
                    </BrushRow>
                  </li>
                ))}
              </BrushList>
              <Scrollbar thumb="22%" top={5} />
            </Inset>
            <InsetBar>
              <Icons
                look="raised"
                items={[
                  ["cloudDown", "Download brush"], ["doc", "Add brush"], ["docChecker", "Add bitmap brush", "raised", true],
                  ["docS", "Add script brush"], ["folder", "Add folder"], ["copy", "Duplicate brush"], "|",
                  ["trash", "Delete brush"],
                ]}
              />
            </InsetBar>
          </Panel>
          <Splitter $size={10} />

          <Panel title="Brush Preview" grow>
            <Preview>
              <Dab />
              <Stroke>
                <Svg viewBox="0 0 244 100" preserveAspectRatio="xMinYMin meet">
                  <path
                    d="M14 53C50 41 75 37 95 38C135 39 150 56 196 54L230 53C210 60 190 66 176 65C140 63 120 44 90 45C60 45 35 50 14 53Z"
                    style={{ fill: "#000", stroke: "none" }}
                  />
                </Svg>
              </Stroke>
            </Preview>
          </Panel>
        </Dock>
        <Splitter $vertical $size={7} />

        <Canvas>
          <Help>
            {help.map(([title, lines]) => (
              <div key={title}>
                <h2>{title}</h2>
                <ul>{lines.map((l) => <li key={l}>* {l}</li>)}</ul>
              </div>
            ))}
          </Help>
        </Canvas>
        <Splitter $vertical $size={7} />

        <Dock $w={636}>
          <Panel title="Navigator">
            <Bar>
              <Icons
                items={[["zoom1", "Actual size"], "|", ["zoomIn", "Zoom in"], ["fit", "Fit"], ["zoomOut", "Zoom out"], "|", ...viewTools]}
              />
            </Bar>
            <Viewer $h={163} />
          </Panel>
          <Splitter $size={7} />

          <Panel title="Layer">
            <Field>
              <label htmlFor="opacity">Opacity</label>
              <Range id="opacity" $fill={100} $solid="#c0c0c0" disabled />
              <Value>---</Value>
            </Field>
            <Field>
              <label htmlFor="blending">Blending</label>
              <SelectWrap $disabled>
                <select id="blending" disabled><option>Normal</option></select>
                <Caret />
              </SelectWrap>
            </Field>
            <Checks>
              {["Protect Alpha", "Clipping", "Lock"].map((l) => (
                <Check key={l} $dim><input type="checkbox" disabled />{l}</Check>
              ))}
            </Checks>
            <LayerList><Scrollbar thumb="100%" /></LayerList>
            <InsetBar>
              <Icons
                items={[
                  ["doc", "Add layer"], ["doc8", "Add 8bit layer"], ["doc1", "Add 1bit layer"],
                  ["docPlus", "Add other layer", "bare", true], ["folder", "Add folder"], "|",
                  ["copy", "Duplicate layer"], ["merge", "Merge layer"], "|", ["trash", "Delete layer"],
                ]}
              />
            </InsetBar>
          </Panel>
          <Splitter $size={10} />

          <Panel title="Reference">
            <Bar>
              <Icons
                items={[
                  ["cloudDown", "Open from cloud", "raised"], ["folderOpen", "Open file", "raised"], ["cross", "Clear"], "|",
                  ["zoomIn", "Zoom in"], ["fit", "Fit"], ["zoomOut", "Zoom out"], "|",
                  ["dropper", "Eyedropper"], ["hand", "Hand", "active"], "|", ...viewTools,
                ]}
              />
            </Bar>
            <Viewer $h={197} $checker />
          </Panel>
          <Splitter $size={7} />

          <Panel title="Brush Size" grow>
            <Sizes>
              <SizeGrid>
                {sizes.map(([n, d]) => (
                  <Size key={n}>
                    <DotBox><Dot $d={d} /></DotBox>
                    {n}
                  </Size>
                ))}
              </SizeGrid>
              <Scrollbar thumb="100%" />
            </Sizes>
          </Panel>
        </Dock>
      </Workspace>
    </Window>
  );
}
